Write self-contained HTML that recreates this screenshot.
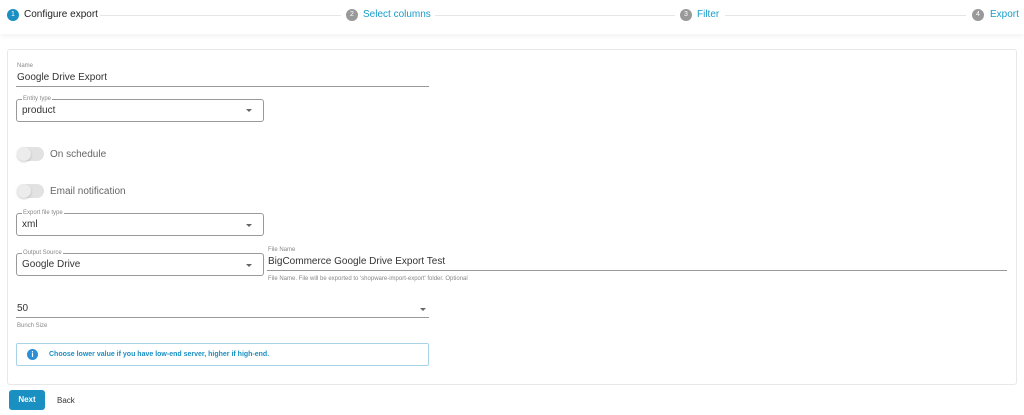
<!DOCTYPE html>
<html><head><style>
*{margin:0;padding:0;box-sizing:border-box}
body{width:1024px;height:415px;background:#fff;font-family:"Liberation Sans",sans-serif;position:relative;overflow:hidden;color:#333}
.a{position:absolute}
.top{left:0;top:0;width:1024px;height:34px;background:#fff;box-shadow:0 2px 6px rgba(0,0,0,.06)}
.c{width:12px;height:12px;border-radius:50%;background:#999;color:#fff;font-size:7px;text-align:center;line-height:12px;top:9px}
.st{font-size:10px;top:9px;color:#1a9bc9}
.ln{height:1px;background:#e6e6e6;top:15px}
.card{left:7px;top:49px;width:1010px;height:336px;border:1px solid #e8e8e8;border-radius:3px}
.lab{font-size:6px;color:#888}
.val{font-size:10px;color:#333}
.box{border:1px solid #999;border-radius:3px}
.leg{font-size:6px;color:#888;background:#fff;padding:0 1px}
.arr{width:0;height:0;border-left:3px solid transparent;border-right:3px solid transparent;border-top:3px solid #666}
.tg{width:27px;height:14px;border-radius:7px;background:#e2e2e2}
.tg:after{content:"";position:absolute;left:0;top:0;width:14px;height:14px;border-radius:50%;background:#ececec;box-shadow:0 1px 2px rgba(0,0,0,.2)}
.tl{font-size:10px;color:#666}
</style></head><body>
<div class="a top"></div>
<div class="a c" style="left:7px;background:#1a8fc2">1</div>
<div class="a st" style="left:24px;color:#222">Configure export</div>
<div class="a ln" style="left:100px;width:241px"></div>
<div class="a c" style="left:346px">2</div>
<div class="a st" style="left:363px">Select columns</div>
<div class="a ln" style="left:435px;width:240px"></div>
<div class="a c" style="left:680px">3</div>
<div class="a st" style="left:697px">Filter</div>
<div class="a ln" style="left:725px;width:241px"></div>
<div class="a c" style="left:972px">4</div>
<div class="a st" style="left:990px">Export</div>

<div class="a card"></div>
<div class="a lab" style="left:17px;top:63px">Name</div>
<div class="a val" style="left:17px;top:72px">Google Drive Export</div>
<div class="a" style="left:16px;top:86px;width:413px;height:1px;background:#999"></div>

<div class="a box" style="left:16px;top:99px;width:248px;height:23px"></div>
<div class="a leg" style="left:22px;top:96px">Entity type</div>
<div class="a val" style="left:22px;top:105px">product</div>
<div class="a arr" style="left:246px;top:109px"></div>

<div class="a tg" style="left:17px;top:147px"></div>
<div class="a tl" style="left:50px;top:149px">On schedule</div>
<div class="a tg" style="left:17px;top:184px"></div>
<div class="a tl" style="left:50px;top:186px">Email notification</div>

<div class="a box" style="left:16px;top:213px;width:248px;height:23px"></div>
<div class="a leg" style="left:22px;top:210px">Export file type</div>
<div class="a val" style="left:22px;top:219px">xml</div>
<div class="a arr" style="left:246px;top:224px"></div>

<div class="a box" style="left:16px;top:253px;width:248px;height:23px"></div>
<div class="a leg" style="left:22px;top:250px">Output Source</div>
<div class="a val" style="left:22px;top:259px">Google Drive</div>
<div class="a arr" style="left:246px;top:264px"></div>

<div class="a lab" style="left:268px;top:247px">File Name</div>
<div class="a val" style="left:268px;top:256px">BigCommerce Google Drive Export Test</div>
<div class="a" style="left:267px;top:270px;width:740px;height:1px;background:#999"></div>
<div class="a lab" style="left:268px;top:276px">File Name. File will be exported to 'shopware-import-export' folder. Optional</div>

<div class="a val" style="left:17px;top:303px">50</div>
<div class="a arr" style="left:420px;top:308px"></div>
<div class="a" style="left:16px;top:317px;width:413px;height:1px;background:#999"></div>
<div class="a lab" style="left:17px;top:323px">Bunch Size</div>

<div class="a" style="left:16px;top:343px;width:413px;height:23px;border:1px solid #a9d3e6;border-radius:2px"></div>
<div class="a" style="left:27px;top:349px;width:11px;height:11px;border-radius:50%;background:#2a8fd8;color:#fff;font-size:8px;font-weight:bold;text-align:center;line-height:11px">i</div>
<div class="a" style="left:49px;top:351px;font-size:7px;font-weight:bold;color:#1a8fc2">Choose lower value if you have low-end server, higher if high-end.</div>

<div class="a" style="left:9px;top:390px;width:36px;height:20px;border-radius:3px;background:#1a8fc2;color:#fff;font-size:8px;font-weight:bold;text-align:center;line-height:20px">Next</div>
<div class="a" style="left:57px;top:396px;font-size:8px;color:#333">Back</div>
</body></html>
